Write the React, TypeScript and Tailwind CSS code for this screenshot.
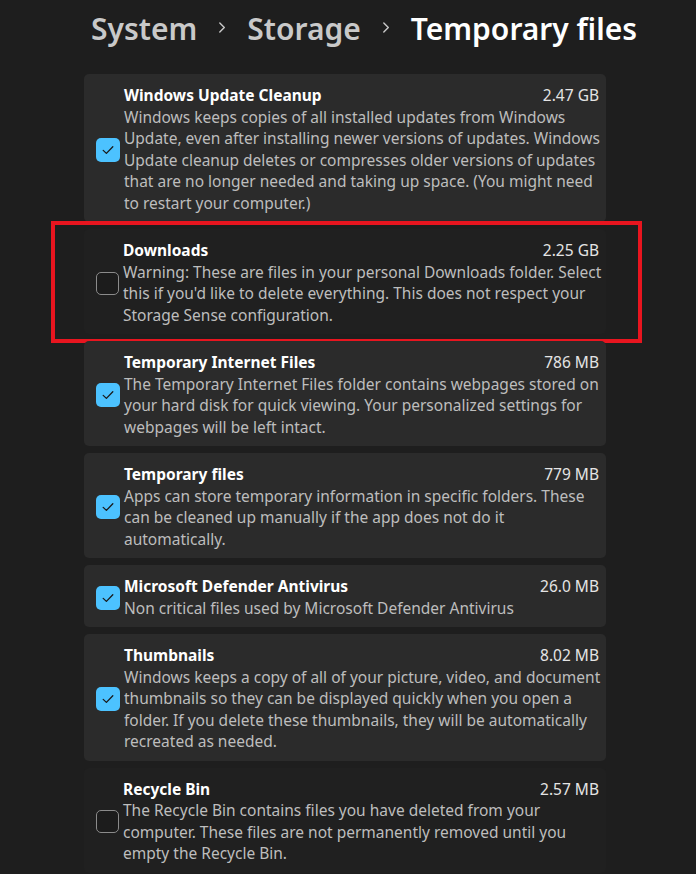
import React from 'react';

interface Item {
  title: string;
  size: string;
  lines: string[];
  checked: boolean;
  marked?: boolean;
}

const items: Item[] = [
  {
    title: 'Windows Update Cleanup',
    size: '2.47 GB',
    checked: true,
    lines: [
      'Windows keeps copies of all installed updates from Windows',
      'Update, even after installing newer versions of updates. Windows',
      'Update cleanup deletes or compresses older versions of updates',
      'that are no longer needed and taking up space. (You might need',
      'to restart your computer.)',
    ],
  },
  {
    title: 'Downloads',
    size: '2.25 GB',
    checked: false,
    marked: true,
    lines: [
      'Warning: These are files in your personal Downloads folder. Select',
      "this if you'd like to delete everything. This does not respect your",
      'Storage Sense configuration.',
    ],
  },
  {
    title: 'Temporary Internet Files',
    size: '786 MB',
    checked: true,
    lines: [
      'The Temporary Internet Files folder contains webpages stored on',
      'your hard disk for quick viewing. Your personalized settings for',
      'webpages will be left intact.',
    ],
  },
  {
    title: 'Temporary files',
    size: '779 MB',
    checked: true,
    lines: [
      'Apps can store temporary information in specific folders. These',
      'can be cleaned up manually if the app does not do it',
      'automatically.',
    ],
  },
  {
    title: 'Microsoft Defender Antivirus',
    size: '26.0 MB',
    checked: true,
    lines: ['Non critical files used by Microsoft Defender Antivirus'],
  },
  {
    title: 'Thumbnails',
    size: '8.02 MB',
    checked: true,
    lines: [
      'Windows keeps a copy of all of your picture, video, and document',
      'thumbnails so they can be displayed quickly when you open a',
      'folder. If you delete these thumbnails, they will be automatically',
      'recreated as needed.',
    ],
  },
  {
    title: 'Recycle Bin',
    size: '2.57 MB',
    checked: false,
    lines: [
      'The Recycle Bin contains files you have deleted from your',
      'computer. These files are not permanently removed until you',
      'empty the Recycle Bin.',
    ],
  },
];

const CheckBox: React.FC<{ checked: boolean }> = ({ checked }) =>
  checked ? (
    <div className="w-6 h-6 shrink-0 rounded-[5px] bg-[#4cc2ff] flex items-center justify-center">
      <svg width="16" height="16" viewBox="0 0 16 16" fill="none">
        <path d="M3.2 8.4 L6.4 11.4 L12.8 4.8" stroke="#1a1a1a" strokeWidth="1.3" strokeLinecap="round" strokeLinejoin="round" />
      </svg>
    </div>
  ) : (
    <div className="w-[23px] h-[23px] shrink-0 rounded-[5px] border border-[#8b8b8b] bg-[#1c1c1c]" />
  );

const Chevron = () => (
  <svg width="8" height="11" viewBox="0 0 8 11" fill="none" className="mt-[-3px]">
    <path d="M1.8 1 L6.3 5.5 L1.8 10" stroke="#c9c9c9" strokeWidth="1.4" strokeLinecap="round" strokeLinejoin="round" />
  </svg>
);

const Row: React.FC<{ item: Item }> = ({ item }) => (
  <div
    className={`relative flex items-center pl-3 pr-[7px] pt-[11px] pb-[8px] rounded-[5px] ${
      item.checked ? 'bg-[#2b2b2b]' : 'bg-[#202020]'
    }`}
  >
    <CheckBox checked={item.checked} />
    <div className="ml-1 flex-1 min-w-0 leading-[21.5px]">
      <div className="flex justify-between">
        <span className="font-bold text-white">{item.title}</span>
        <span className="text-[#e4e4e4]">{item.size}</span>
      </div>
      {item.lines.map((l, i) => (
        <div key={i} className="text-[#bdbdbd] whitespace-nowrap">
          {l}
        </div>
      ))}
    </div>
    {item.marked && (
      <div className="absolute -left-[33px] -right-[36px] -top-[8px] -bottom-[9px] border-4 border-[#e8151f]" />
    )}
  </div>
);

export default function App() {
  return (
    <div
      className="h-[874px] overflow-hidden bg-[#1e1e1e] text-[15.5px]"
      style={{ fontFamily: '"Noto Sans", "Open Sans", sans-serif' }}
    >
      <div className="pl-[91px] pt-[9px] h-[74px] flex items-start">
        <div className="flex items-center gap-[21px] text-[30px] font-semibold leading-[40px]">
          <span className="text-[#c9c9c9]">System</span>
          <Chevron />
          <span className="text-[#c9c9c9]">Storage</span>
          <Chevron />
          <span className="text-white">Temporary files</span>
        </div>
      </div>
      <div className="ml-[84px] w-[522px] flex flex-col gap-[7px]">
        {items.map((it) => (
          <Row key={it.title} item={it} />
        ))}
      </div>
    </div>
  );
}
